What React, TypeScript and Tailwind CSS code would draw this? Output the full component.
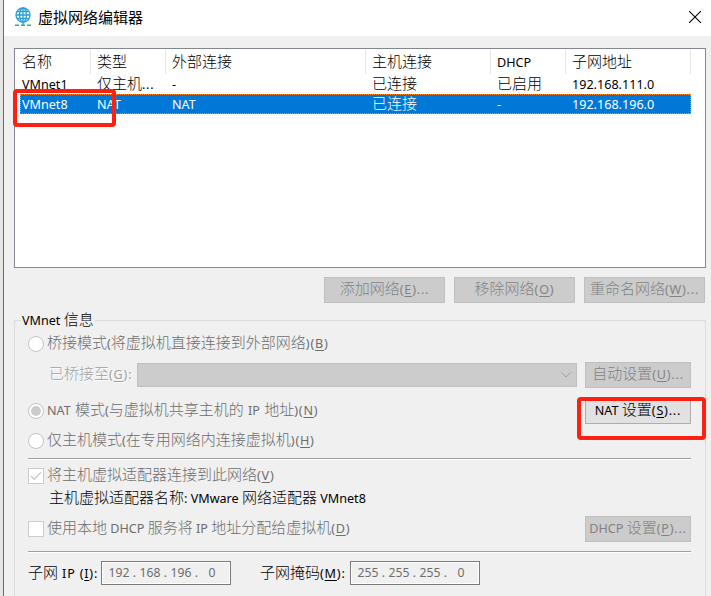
import React from 'react';

const CJK = /([\u4e00-\u9fff]+)/;

// "&" marks the mnemonic letter that follows it
const Latin: React.FC<{ text: string }> = ({ text }) => {
  const at = text.indexOf('&');
  if (at < 0) return text.startsWith('...') ? <span className="tracking-[0.7px]">{text}</span> : <>{text}</>;
  return (
    <span className="tracking-[0.8px]">
      {text.slice(0, at)}
      <span className="underline underline-offset-2 decoration-1">{text[at + 1]}</span>
      {text.slice(at + 2)}
    </span>
  );
};

const Label: React.FC<{ text: string; className?: string }> = ({ text, className = '' }) => (
  <span className={`whitespace-pre font-['Noto_Sans','Noto_Sans_CJK_SC',sans-serif] text-[12.6px] leading-5 ${className}`}>
    {text.split(CJK).map((part, i) =>
      i % 2 ? (
        <span key={i} className="font-['Noto_Sans_CJK_SC',sans-serif] text-[15px] leading-none font-light">{part}</span>
      ) : (
        <Latin key={i} text={part} />
      ),
    )}
  </span>
);

const Button: React.FC<{ text: string; className: string; enabled?: boolean }> = ({ text, className, enabled }) => (
  <button
    className={`flex h-[26px] shrink-0 items-center justify-center border ${
      enabled ? 'border-[#adadad] bg-[#e1e1e1] text-black' : 'border-[#bfbfbf] bg-[#cccccc] text-[#838383]'
    } ${className}`}
  >
    <Label text={text} />
  </button>
);

const Radio: React.FC<{ checked?: boolean }> = ({ checked }) => (
  <span className="mr-[3px] flex size-4 shrink-0 items-center justify-center rounded-full border border-[#c4c4c4] bg-white">
    {checked && <span className="size-2.5 rounded-full bg-[#cccccc]" />}
  </span>
);

const Checkbox: React.FC<{ checked?: boolean }> = ({ checked }) => (
  <span className="mr-[3px] flex size-4 shrink-0 items-center justify-center border border-[#cccccc] bg-white">
    {checked && (
      <svg width="14" height="14" viewBox="0 0 14 14" fill="none" stroke="#c4c4c4" strokeWidth="1.3">
        <path d="M2 7l3.2 3.2L12 3.4" />
      </svg>
    )}
  </span>
);

const Separator = () => <div className="h-0.5 shrink-0 border-t border-[#a0a0a0] bg-white" />;

const AddressField: React.FC<{ parts: string[] }> = ({ parts }) => (
  <div className="flex h-6 w-[130px] items-center border border-[#7a7a7a] bg-[#f0f0f0] pl-[5px] font-['Noto_Sans',sans-serif] text-[12.2px] text-[#6d6d6d] shadow-[inset_0_0_0_1px_#fff]">
    {parts.map((part, i) => (
      <React.Fragment key={i}>
        {i > 0 && <span className="w-[7px] text-center">.</span>}
        <span className="w-6 text-center">{part}</span>
      </React.Fragment>
    ))}
  </div>
);

const GRID = 'grid grid-cols-[70px_75px_200px_125px_75px_125px]';

const headers = ['名称', '类型', '外部连接', '主机连接', 'DHCP', '子网地址'];
const networks = [
  ['VMnet1', '仅主机...', '-', '已连接', '已启用', '192.168.111.0'],
  ['VMnet8', 'NAT', 'NAT', '已连接', '-', '192.168.196.0'],
];

const GlobeIcon = () => (
  <svg width="18" height="20" viewBox="0 0 18 20" fill="none" stroke="#2a9fd6" strokeWidth="1.3">
    <circle cx="9" cy="8" r="7" />
    <ellipse cx="9" cy="8" rx="3.4" ry="7" />
    <path d="M9 1v14M2 8h14M3.2 4.5h11.6M3.2 11.5h11.6" />
    <path d="M9 15v3" />
    <path d="M1 18.3h4M7 18.3h4M13 18.3h4" stroke="#3aa6a0" strokeWidth="1.6" />
  </svg>
);

const App: React.FC = () => {
  return (
    <div className="relative flex h-[596px] w-[711px] overflow-hidden bg-[#f0f0f0] text-black">
      <div className="w-1 shrink-0 border-r border-[#6b6b6b] bg-[#e6e6e6]" />
      <div className="flex min-w-0 flex-1 flex-col">
        <header className="flex h-9 shrink-0 items-center bg-white pb-0.5 pl-2.5">
          <GlobeIcon />
          <span className="ml-1.5 font-['Noto_Sans_CJK_SC',sans-serif] text-[15px]">虚拟网络编辑器</span>
          <svg className="mr-2.5 ml-auto" width="12" height="12" viewBox="0 0 12 12" stroke="#000" strokeWidth="1.1">
            <path d="M0 0l12 12M12 0L0 12" />
          </svg>
        </header>

        <main className="flex flex-1 flex-col pt-3 pr-[5px] pl-2.5">
          <div className="h-[220px] shrink-0 border border-[#828790] bg-white pl-[5px]">
            <div className={`${GRID} h-[25px] w-[671px] pt-px`}>
              {headers.map((h, i) => (
                <div
                  key={h}
                  className={`-mr-px flex h-6 items-center border-r border-[#e5e5e5] pt-px ${i === 0 ? 'pl-0.5' : 'pl-[7px]'}`}
                >
                  <Label text={h} />
                </div>
              ))}
            </div>
            {networks.map((row, r) => (
              <div
                key={row[0]}
                className={`${GRID} h-5 w-[671px] ${
                  r === 1 ? 'bg-[#0078d7] text-white outline-1 -outline-offset-1 outline-dotted outline-[#ff8728]' : ''
                }`}
              >
                {row.map((cell, i) => (
                  <div key={i} className={`flex h-5 items-center pt-0.5 ${i === 0 ? 'pl-0.5' : 'pl-[7px]'}`}>
                    <Label text={cell} />
                  </div>
                ))}
              </div>
            ))}
          </div>

          <div className="mt-[9px] flex shrink-0 justify-end gap-[9px] pr-px">
            <Button text="添加网络(&E)..." className="w-[121px]" />
            <Button text="移除网络(&O)" className="w-[121px]" />
            <Button text="重命名网络(&W)..." className="w-[121px]" />
          </div>

          <fieldset className="mt-[7px] flex-1 border border-b-0 border-[#dcdcdc] pr-3.5 pl-[13px]">
            <legend className="-ml-[7px] h-5 px-px leading-[18px]">
              <Label text="VMnet 信息" />
            </legend>
            <div className="-mt-px flex flex-col text-[#6d6d6d]">
              <div className="flex h-[29px] items-center">
                <Radio />
                <Label text="桥接模式(将虚拟机直接连接到外部网络)(&B)" />
              </div>
              <div className="flex h-[34px] items-center">
                <Label text="已桥接至(&G):" className="w-[87px] shrink-0 pl-[21px] text-[#a0a0a0] [text-shadow:1px_1px_#fff]" />
                <div className="ml-[22px] flex h-6 w-[440px] items-center justify-end border border-[#bfbfbf] bg-[#cccccc] pr-[5px]">
                  <svg width="10" height="6" viewBox="0 0 10 6" fill="none" stroke="#a0a0a0">
                    <path d="M.5.5L5 5 9.500.5" />
                  </svg>
                </div>
                <Button text="自动设置(&U)..." className="ml-2 w-[106px]" />
              </div>
              <div className="flex h-[38px] items-center">
                <Radio checked />
                <Label text="NAT 模式(与虚拟机共享主机的 IP 地址)(&N)" className="[word-spacing:1px]" />
                <Button text="NAT 设置(&S)..." enabled className="ml-auto w-[106px]" />
              </div>
              <div className="mb-1.5 flex h-[22px] items-center">
                <Radio />
                <Label text="仅主机模式(在专用网络内连接虚拟机)(&H)" />
              </div>
              <Separator />
              <div className="flex h-[31px] items-center">
                <Checkbox checked />
                <Label text="将主机虚拟适配器连接到此网络(&V)" />
              </div>
              <div className="flex h-4 items-center pl-[21px] text-black">
                <Label text="主机虚拟适配器名称: VMware 网络适配器 VMnet8" />
              </div>
              <div className="flex h-[44px] items-center">
                <Checkbox />
                <Label text="使用本地 DHCP 服务将 IP 地址分配给虚拟机(&D)" />
                <Button text="DHCP 设置(&P)..." className="ml-auto w-[106px]" />
              </div>
              <Separator />
              <div className="flex h-10 items-center text-black">
                <Label text="子网 IP (&I):" className="w-[73px] pt-px" />
                <AddressField parts={['192', '168', '196', '0']} />
                <Label text="子网掩码(&M):" className="ml-[29px] w-[90px] pt-px" />
                <AddressField parts={['255', '255', '255', '0']} />
              </div>
            </div>
          </fieldset>
        </main>
      </div>

      {/* highlight frames over the selected network and the NAT button */}
      <div className="absolute top-[89px] left-[13px] h-[38px] w-[103px] rounded-sm border-4 border-[#ff2012]" />
      <div className="absolute top-[397px] left-[577px] h-[43px] w-[129px] rounded-sm border-4 border-[#ff2012]" />
    </div>
  );
};

export default App;
